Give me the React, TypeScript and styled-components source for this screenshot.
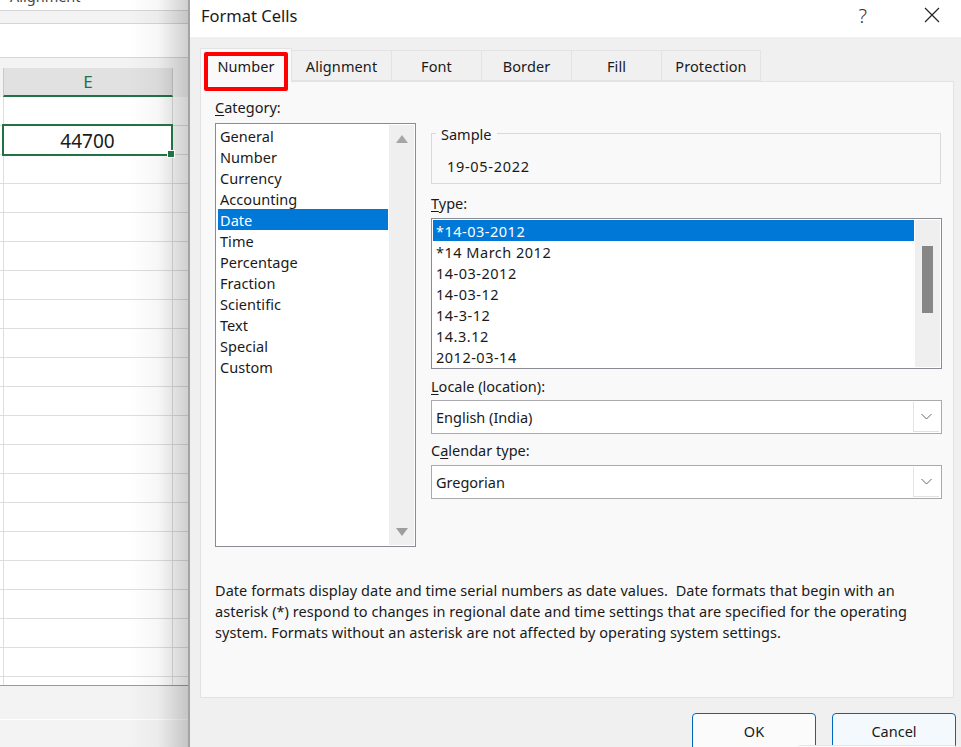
import styled, { createGlobalStyle } from 'styled-components';

const GlobalStyle = createGlobalStyle`
  html, body {
    margin: 0;
    padding: 0;
    background: #fff;
    overflow: hidden;
  }
  * {
    box-sizing: border-box;
  }
`;

const Page = styled.div`
  width: 961px;
  height: 747px;
  display: flex;
  overflow: hidden;
  font-family: 'Noto Sans', 'Open Sans', sans-serif;
  color: #1a1a1a;
`;

/* sheet behind the dialog */
const Sheet = styled.div`
  position: relative;
  width: 188px;
  flex: none;
  display: flex;
  flex-direction: column;
  background: #fff;
  overflow: hidden;

  &::after {
    content: '';
    position: absolute;
    top: 0;
    right: 0;
    bottom: 0;
    width: 60px;
    background: linear-gradient(to right, rgba(0, 0, 0, 0), rgba(0, 0, 0, 0.03) 50%, rgba(0, 0, 0, 0.19));
    pointer-events: none;
  }
`;

const RibbonLabel = styled.div`
  height: 10px;
  padding-left: 10px;
  font-size: 14.5px;
  line-height: 16px;
  color: #444;
  overflow: hidden;

  span {
    display: block;
    margin-top: -12px;
  }
`;

const RibbonGroup = styled.div`
  height: 14px;
  background: #f3f3f3;
  border-top: 1px solid #d6d6d6;
  border-bottom: 1px solid #d6d6d6;
`;

const FormulaBar = styled.div`
  height: 33px;
  background: #fff;
`;

const ColumnBar = styled.div`
  height: 11px;
  background: #f3f3f3;
  border-top: 1px solid #d6d6d6;
`;

const HeaderRow = styled.div`
  height: 29px;
  display: flex;
  background: #f3f3f3;
`;

const ColumnHead = styled.div`
  width: 170px;
  margin-left: 3px;
  display: flex;
  align-items: center;
  justify-content: center;
  background: #e1e1e1;
  border-left: 1px solid #c8c8c8;
  border-right: 1px solid #c8c8c8;
  border-bottom: 2px solid #217346;
  font-size: 17px;
  color: #217346;
`;

const Rows = styled.div`
  height: 589px;
  display: flex;
  flex-direction: column;
  border-bottom: 1px solid #9a9a9a;
  overflow: hidden;
`;

const Row = styled.div`
  height: 29px;
  flex: none;
  display: flex;
  border-bottom: 1px solid #dedede;
`;

const EmptyCell = styled.div<{ $width: number }>`
  width: ${({ $width }) => $width}px;
  flex: none;
  border-right: 1px solid #dedede;
`;

const ValueCell = styled.div`
  position: relative;
  width: 169px;
  flex: none;
`;

const ActiveCell = styled.div`
  position: absolute;
  z-index: 1;
  left: -2px;
  top: -2px;
  width: 171px;
  height: 32px;
  display: flex;
  align-items: center;
  justify-content: center;
  padding-top: 2px;
  border: 2px solid #217346;
  background: #fff;
  font-size: 19px;
  color: #1a1a1a;

  &::after {
    content: '';
    position: absolute;
    right: -3px;
    bottom: -3px;
    width: 6px;
    height: 6px;
    background: #217346;
    outline: 1px solid #fff;
  }
`;

const StatusBar = styled.div`
  flex: 1;
  background: #f3f3f3;
  display: flex;
  flex-direction: column;
`;

const StatusTop = styled.div`
  height: 34px;
  border-bottom: 1px solid #fff;
`;

/* the dialog */
const Dialog = styled.div`
  position: relative;
  flex: 1;
  display: flex;
  flex-direction: column;
  border-left: 2px solid #a3a3a3;
  background: #f0f0f0;
`;

const TitleBar = styled.div`
  height: 37px;
  flex: none;
  display: flex;
  align-items: center;
  background: #fff;
  padding: 0 21px 7px 11px;
`;

const Title = styled.div`
  flex: 1;
  font-size: 16.5px;
  color: #1a1a1a;
`;

const HelpGlyph = styled.div`
  margin-right: 57px;
  font-size: 20px;
  font-weight: 300;
  color: #333;
`;

const Body = styled.div`
  flex: 1;
  display: flex;
  flex-direction: column;
  padding: 11px 7px 0 10px;
  min-height: 0;
`;

const TabStrip = styled.div`
  height: 33px;
  flex: none;
  display: flex;
  align-items: flex-end;
`;

const Tab = styled.div<{ $active?: boolean; $width: number }>`
  position: relative;
  width: ${({ $width }) => $width}px;
  height: ${({ $active }) => ($active ? 34 : 31)}px;
  display: flex;
  align-items: center;
  justify-content: center;
  margin-bottom: ${({ $active }) => ($active ? -1 : 0)}px;
  z-index: ${({ $active }) => ($active ? 1 : 0)};
  background: ${({ $active }) => ($active ? '#f9f9f9' : '#f0f0f0')};
  border: 1px solid #e3e3e3;
  border-left-width: ${({ $active }) => ($active ? 1 : 0)}px;
  border-bottom-width: ${({ $active }) => ($active ? 0 : 1)}px;
  font-size: 14.5px;
  letter-spacing: 0.1px;
  padding-top: ${({ $active }) => ($active ? 0 : 1)}px;
`;

const Highlight = styled.div`
  position: absolute;
  left: 3px;
  top: 3px;
  width: 84px;
  height: 39px;
  border: 4px solid #ff0000;
  border-radius: 2px;
`;

const Panel = styled.div`
  height: 617px;
  flex: none;
  display: flex;
  flex-direction: column;
  padding: 15px 11px 0 14px;
  background: #f9f9f9;
  border: 1px solid #e3e3e3;
`;

const Columns = styled.div`
  display: flex;
  gap: 15px;
`;

const CategoryColumn = styled.div`
  width: 201px;
  flex: none;
  display: flex;
  flex-direction: column;
  gap: 6px;
`;

const FieldLabel = styled.div<{ $gap?: number }>`
  height: 20px;
  margin-top: ${({ $gap }) => $gap ?? 0}px;
  font-size: 14.5px;
  line-height: 20px;

  u {
    text-underline-offset: 2px;
  }
`;

const ListFrame = styled.div<{ $height: number; $top?: number }>`
  height: ${({ $height }) => $height}px;
  margin-top: ${({ $top }) => $top ?? 0}px;
  flex: none;
  display: flex;
  padding: 1px;
  background: #fff;
  border: 1px solid #8b8b93;
  overflow: hidden;
`;

const ListItems = styled.div<{ $inset: number }>`
  flex: 1;
  min-width: 0;
  margin-right: 1px;
  padding-left: ${({ $inset }) => $inset}px;
`;

const ListItem = styled.div<{ $selected?: boolean; $pad: number; $numeric?: boolean }>`
  height: 21px;
  padding: 1px 0 0 ${({ $pad }) => $pad}px;
  font-size: 14.5px;
  line-height: 20px;
  white-space: nowrap;
  letter-spacing: ${({ $numeric }) => ($numeric ? 0.5 : 0.05)}px;
  background: ${({ $selected }) => ($selected ? '#0078d7' : 'transparent')};
  color: ${({ $selected }) => ($selected ? '#fff' : '#1a1a1a')};
`;

const ScrollTrack = styled.div`
  width: 25px;
  flex: none;
  position: relative;
  display: flex;
  flex-direction: column;
  align-items: center;
  justify-content: space-between;
  padding: 9px 0 8px;
  background: #efefef;
`;

const ScrollThumb = styled.div`
  position: absolute;
  left: 7px;
  top: 26px;
  width: 11px;
  height: 67px;
  background: #868686;
`;

const DetailColumn = styled.div`
  flex: 1;
  min-width: 0;
  display: flex;
  flex-direction: column;
  padding-top: 36px;
`;

const SampleBox = styled.div`
  height: 51px;
  margin-right: 1px;
  padding-left: 15px;
  border: 1px solid #d9d9d9;
  position: relative;
`;

const SampleLegend = styled.div`
  position: absolute;
  left: 4px;
  top: -10px;
  padding: 0 5px;
  background: #f9f9f9;
  font-size: 14.5px;
  line-height: 20px;
`;

const SampleValue = styled.div`
  padding-top: 22px;
  font-size: 14.5px;
  line-height: 20px;
  letter-spacing: 0.7px;
`;

const Combo = styled.div<{ $top: number }>`
  height: 34px;
  margin-top: ${({ $top }) => $top}px;
  display: flex;
  align-items: center;
  justify-content: space-between;
  padding: 1px 2px 1px 4px;
  background: #fff;
  border: 1px solid #a9a9ae;
  font-size: 14.5px;
`;

const ComboButton = styled.div`
  width: 26px;
  height: 30px;
  display: flex;
  align-items: center;
  justify-content: center;
  background: #fff;
  border-left: 1px solid #e4e4e4;
  border-bottom: 1px solid #e0e0e0;
`;

const Description = styled.div`
  margin-top: 33px;
  width: 715px;
  font-size: 14.5px;
  line-height: 21px;
  letter-spacing: 0.055px;
`;

const Footer = styled.div`
  flex: 1;
  display: flex;
  justify-content: flex-end;
  gap: 16px;
  padding-top: 15px;
  margin-right: -2px;
`;

const ActionButton = styled.div<{ $tint?: boolean }>`
  width: 124px;
  height: 40px;
  padding-top: 3px;
  text-align: center;
  font-size: 14.5px;
  line-height: 28px;
  background: ${({ $tint }) => ($tint ? '#f4f9fd' : '#fbfbfb')};
  border: 1px solid #0067c0;
  border-radius: 4px 4px 0 0;
`;

/* top edge of something lying over the buttons, cut by the window */
const OverlayEdge = styled.div`
  position: absolute;
  left: 608px;
  right: 5px;
  bottom: 0;
  height: 2px;
  background: #fbfbfb;
  border-top: 1px solid #e6e6e6;
  border-radius: 3px 3px 0 0;
`;

const categories = ['General', 'Number', 'Currency', 'Accounting', 'Date', 'Time', 'Percentage', 'Fraction', 'Scientific', 'Text', 'Special', 'Custom'];
const dateTypes = ['*14-03-2012', '*14 March 2012', '14-03-2012', '14-03-12', '14-3-12', '14.3.12', '2012-03-14'];
const tabs = [
  { name: 'Alignment', width: 100 },
  { name: 'Font', width: 90 },
  { name: 'Border', width: 90 },
  { name: 'Fill', width: 90 },
  { name: 'Protection', width: 99 },
];

const rowCount = 21;

const ScrollArrow = ({ down }: { down?: boolean }) => (
  <svg width="12" height="10" viewBox="0 0 12 10">
    <path d={down ? 'M0 1h12L6 9z' : 'M6 1l6 8H0z'} fill={down ? '#9d9d9d' : '#a6a6a6'} />
  </svg>
);

const Chevron = () => (
  <svg width="11" height="7" viewBox="0 0 11 7">
    <path d="M.5 1l5 5 5-5" fill="none" stroke="#666" strokeWidth="1" />
  </svg>
);

const CloseIcon = () => (
  <svg width="16" height="16" viewBox="0 0 16 16">
    <path d="M1 1l14 14M15 1L1 15" fill="none" stroke="#222" strokeWidth="1.2" />
  </svg>
);

const App = () => {
  return (
    <Page>
      <GlobalStyle />
      <Sheet>
        <RibbonLabel>
          <span>Alignment</span>
        </RibbonLabel>
        <RibbonGroup />
        <FormulaBar />
        <ColumnBar />
        <HeaderRow>
          <ColumnHead>E</ColumnHead>
        </HeaderRow>
        <Rows>
          {Array.from({ length: rowCount }, (_, i) => (
            <Row key={i}>
              <EmptyCell $width={4} />
              {i === 1 ? (
                <ValueCell>
                  <ActiveCell>44700</ActiveCell>
                </ValueCell>
              ) : (
                <EmptyCell $width={169} />
              )}
            </Row>
          ))}
        </Rows>
        <StatusBar>
          <StatusTop />
        </StatusBar>
      </Sheet>

      <Dialog>
        <TitleBar>
          <Title>Format Cells</Title>
          <HelpGlyph>?</HelpGlyph>
          <CloseIcon />
        </TitleBar>
        <Body>
          <TabStrip>
            <Tab $active $width={92}>
              Number
              <Highlight />
            </Tab>
            {tabs.map((tab) => (
              <Tab key={tab.name} $width={tab.width}>
                {tab.name}
              </Tab>
            ))}
          </TabStrip>
          <Panel>
            <Columns>
              <CategoryColumn>
                <FieldLabel>
                  <u>C</u>ategory:
                </FieldLabel>
                <ListFrame $height={424}>
                  <ListItems $inset={1}>
                    {categories.map((name) => (
                      <ListItem key={name} $pad={2} $selected={name === 'Date'}>
                        {name}
                      </ListItem>
                    ))}
                  </ListItems>
                  <ScrollTrack>
                    <ScrollArrow />
                    <ScrollArrow down />
                  </ScrollTrack>
                </ListFrame>
              </CategoryColumn>
              <DetailColumn>
                <SampleBox>
                  <SampleLegend>Sample</SampleLegend>
                  <SampleValue>19-05-2022</SampleValue>
                </SampleBox>
                <FieldLabel $gap={9}>
                  <u>T</u>ype:
                </FieldLabel>
                <ListFrame $height={151} $top={5}>
                  <ListItems $inset={0}>
                    {dateTypes.map((name, i) => (
                      <ListItem key={name} $pad={3} $numeric $selected={i === 0}>
                        {name}
                      </ListItem>
                    ))}
                  </ListItems>
                  <ScrollTrack>
                    <ScrollThumb />
                  </ScrollTrack>
                </ListFrame>
                <FieldLabel $gap={7}>
                  <u>L</u>ocale (location):
                </FieldLabel>
                <Combo $top={4}>
                  English (India)
                  <ComboButton>
                    <Chevron />
                  </ComboButton>
                </Combo>
                <FieldLabel $gap={6}>
                  C<u>a</u>lendar type:
                </FieldLabel>
                <Combo $top={5}>
                  Gregorian
                  <ComboButton>
                    <Chevron />
                  </ComboButton>
                </Combo>
              </DetailColumn>
            </Columns>
            <Description>
              Date formats display date and time serial numbers as date values. &nbsp;Date formats that begin with an
              asterisk (*) respond to changes in regional date and time settings that are specified for the operating
              system. Formats without an asterisk are not affected by operating system settings.
            </Description>
          </Panel>
          <Footer>
            <ActionButton>OK</ActionButton>
            <ActionButton $tint>Cancel</ActionButton>
          </Footer>
        </Body>
        <OverlayEdge />
      </Dialog>
    </Page>
  );
};

export default App;
